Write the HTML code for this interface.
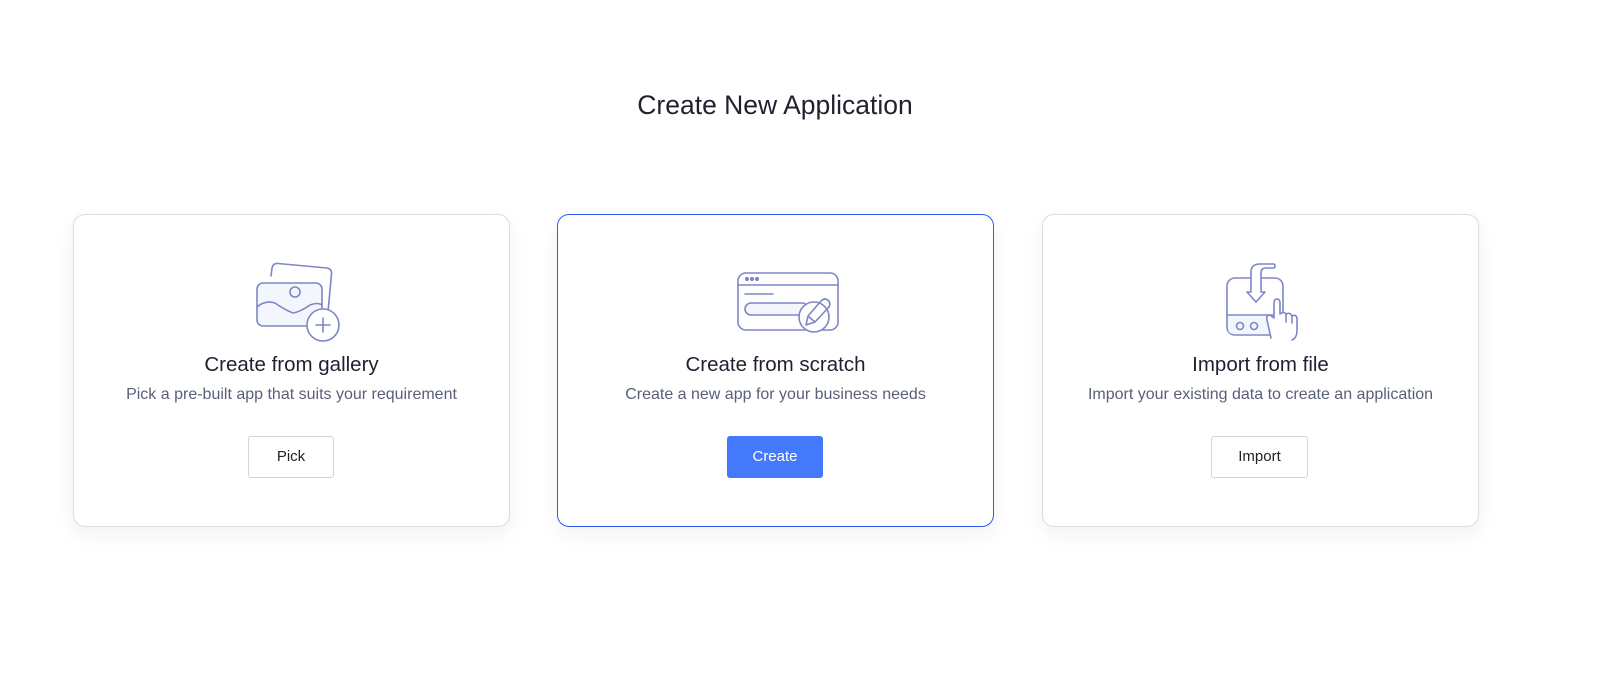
<!DOCTYPE html>
<html><head><meta charset="utf-8"><style>
body{margin:0;width:1600px;height:680px;background:#fff;font-family:"Liberation Sans",sans-serif;position:relative;overflow:hidden}
.t{position:absolute;left:0;width:1550px;text-align:center;top:90px;font-size:26.5px;color:#1f2130}
.c{position:absolute;top:214px;width:435px;height:311px;border:1px solid #dcdde3;border-radius:12px;box-shadow:0 8px 20px rgba(30,40,80,.06);background:#fff}
.c.a{border-color:#2b5bf0}
.h{position:absolute;top:352px;left:0;width:100%;text-align:center;font-size:20.5px;color:#1f2130}
.s{position:absolute;top:386px;left:0;width:100%;text-align:center;font-size:16px;color:#5a5f78}
.b{position:absolute;top:221px;height:40px;border:1px solid #d3d4da;border-radius:3px;background:#fff;font-size:15px;color:#222;line-height:40px;text-align:center}
.b.p{background:#4479fc;border-color:#4479fc;color:#fff}
svg{position:absolute;left:0;top:0}
</style></head><body>
<div class="t">Create New Application</div>
<div class="c" style="left:73px"><div class="h" style="top:138px">Create from gallery</div><div class="s" style="top:171px">Pick a pre-built app that suits your requirement</div><div class="b" style="left:174px;width:84px">Pick</div></div>
<div class="c a" style="left:557px"><div class="h" style="top:138px">Create from scratch</div><div class="s" style="top:171px">Create a new app for your business needs</div><div class="b p" style="left:169px;width:94px">Create</div></div>
<div class="c" style="left:1042px"><div class="h" style="top:138px">Import from file</div><div class="s" style="top:171px">Import your existing data to create an application</div><div class="b" style="left:168px;width:95px">Import</div></div>
<svg width="1600" height="680" fill="none" stroke="#7e86c6" stroke-width="1.6" stroke-linecap="round" stroke-linejoin="round">
<path d="M271 276 L272 268 Q273 263 278 263.5 L327 268 Q332 269 331.5 274 L328 312"/>
<rect x="257" y="283" width="65" height="43" rx="6" fill="#f3f6fd"/>
<path d="M257 307 Q265 300 275 303 Q285 310 293 313 Q300 312 310 305 Q318 302 322 305" />
<circle cx="295" cy="292" r="5"/>
<circle cx="323" cy="325" r="16" fill="#fff"/>
<path d="M323 318v14M316 325h14"/>
<rect x="738" y="273" width="100" height="57" rx="8" fill="#fff"/>
<path d="M738 285h100"/>
<circle cx="747" cy="279" r="1.3" fill="#7e86c6"/><circle cx="752" cy="279" r="1.3" fill="#7e86c6"/><circle cx="757" cy="279" r="1.3" fill="#7e86c6"/>
<path d="M745 294h28"/>
<rect x="745" y="303" width="63" height="12" rx="6" fill="#f3f6fd"/>
<circle cx="814" cy="317" r="15" fill="#fff"/>
<path d="M806 325 L808 316 L821 301 Q825 297 829 301 Q831 305 828 308 L815 322 Z M808 316 L815 322"/>
<rect x="1227" y="278" width="56" height="57" rx="8" fill="#fff"/>
<path d="M1228 316h46v18h-40q-6 0-6-6z" fill="#f3f6fd" stroke="none"/>
<path d="M1227 315h50"/>
<circle cx="1240" cy="326" r="3.5"/><circle cx="1254" cy="326" r="3.5"/>
<path d="M1274 264 Q1276 266 1274 268 L1266 268 Q1261 268 1261 273 L1261 292 L1265 292 L1256 302 L1247 292 L1251 292 L1251 272 Q1251 264 1260 264 Z" fill="#fff"/>
<path d="M1271 338 L1267 320 Q1266 315 1270 315 L1274 318 L1274 303 Q1274 299 1277 299 Q1280 299 1280 303 L1280 314 Q1284 311 1286 314 Q1290 312 1292 316 Q1296 314 1297 318 L1297 330 Q1297 338 1292 340" fill="#fff"/>
<path d="M1286 314v8M1292 316v7"/>
</svg>
</body></html>
